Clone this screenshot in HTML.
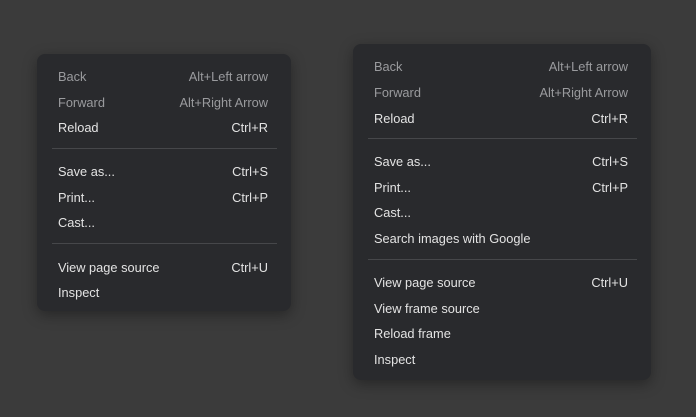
<!DOCTYPE html>
<html><head><meta charset="utf-8"><style>
html,body{margin:0;padding:0;width:696px;height:417px;overflow:hidden;background:#3b3b3b;font-family:"Liberation Sans",sans-serif;}
.m{position:absolute;background:#292a2d;border-radius:8px;box-shadow:0 4px 14px rgba(0,0,0,0.35);}
.r{position:absolute;height:20px;line-height:20px;font-size:12.8px;color:#e3e3e3;margin-top:1px;}
.r.d{color:#9a9b9e;}
.r span{position:absolute;right:0;top:0;}
.s{position:absolute;height:1px;background:#46474a;}
</style></head><body>
<div class="m" style="left:37px;top:54px;width:254px;height:257px"></div>
<div class="m" style="left:353px;top:44px;width:298px;height:336px"></div>

<div class="r d" style="left:58px;top:66px;width:210px">Back<span>Alt+Left arrow</span></div>
<div class="r d" style="left:58px;top:92px;width:210px">Forward<span>Alt+Right Arrow</span></div>
<div class="r" style="left:58px;top:117px;width:210px">Reload<span>Ctrl+R</span></div>
<div class="s" style="left:52px;top:148px;width:225px"></div>
<div class="r" style="left:58px;top:161px;width:210px">Save as...<span>Ctrl+S</span></div>
<div class="r" style="left:58px;top:187px;width:210px">Print...<span>Ctrl+P</span></div>
<div class="r" style="left:58px;top:212px;width:210px">Cast...</div>
<div class="s" style="left:52px;top:243px;width:225px"></div>
<div class="r" style="left:58px;top:257px;width:210px">View page source<span>Ctrl+U</span></div>
<div class="r" style="left:58px;top:282px;width:210px">Inspect</div>

<div class="r d" style="left:374px;top:56px;width:254px">Back<span>Alt+Left arrow</span></div>
<div class="r d" style="left:374px;top:82px;width:254px">Forward<span>Alt+Right Arrow</span></div>
<div class="r" style="left:374px;top:108px;width:254px">Reload<span>Ctrl+R</span></div>
<div class="s" style="left:368px;top:138px;width:269px"></div>
<div class="r" style="left:374px;top:151px;width:254px">Save as...<span>Ctrl+S</span></div>
<div class="r" style="left:374px;top:177px;width:254px">Print...<span>Ctrl+P</span></div>
<div class="r" style="left:374px;top:202px;width:254px">Cast...</div>
<div class="r" style="left:374px;top:228px;width:254px">Search images with Google</div>
<div class="s" style="left:368px;top:259px;width:269px"></div>
<div class="r" style="left:374px;top:272px;width:254px">View page source<span>Ctrl+U</span></div>
<div class="r" style="left:374px;top:298px;width:254px">View frame source</div>
<div class="r" style="left:374px;top:323px;width:254px">Reload frame</div>
<div class="r" style="left:374px;top:349px;width:254px">Inspect</div>
</body></html>
